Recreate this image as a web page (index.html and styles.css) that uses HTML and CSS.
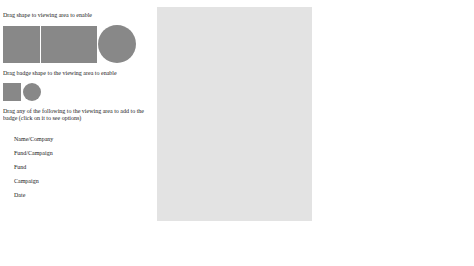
FILE: index.html
```html
<!DOCTYPE html>
<html lang="en">

<head>
    <meta charset="UTF-8">
    <link rel="stylesheet" href="styles.css">
    <title>Badge Designer</title>
</head>

<body>
    <div class="tools">
        <p class="hint hint-shape">Drag shape to viewing area to enable</p>
        <div class="shape-row">
            <div class="shape shape-square"></div>
            <div class="shape shape-rect"></div>
            <div class="shape shape-circle"></div>
        </div>

        <p class="hint hint-badge">Drag badge shape to the viewing area to enable</p>
        <div class="badge-row">
            <div class="badge badge-square"></div>
            <div class="badge badge-circle"></div>
        </div>

        <p class="hint hint-fields">Drag any of the following to the viewing area to add to the badge (click on it to see options)</p>
        <ul class="field-list">
            <li>Name/Company</li>
            <li>Fund/Campaign</li>
            <li>Fund</li>
            <li>Campaign</li>
            <li>Date</li>
        </ul>
    </div>

    <div class="viewing-area"></div>
</body>

</html>
```

FILE: styles.css
```css
body {
    margin: 3px;
    font-family: "Liberation Serif", "Times New Roman", serif;
    font-size: 6px;
    color: #1a1a1a;
    background-color: #fff;
    display: flex;
    align-items: flex-start;
}

.tools {
    width: 154px;
}

.hint {
    margin: 0;
    line-height: 7px;
}

.hint-shape {
    margin-top: 9px;
}

.shape-row {
    display: flex;
    align-items: center;
    gap: 1px;
    margin-top: 6px;
}

.shape {
    background-color: #888;
}

.shape-square {
    width: 37px;
    height: 37px;
}

.shape-rect {
    width: 56px;
    height: 37px;
}

.shape-circle {
    width: 38px;
    height: 38px;
    border-radius: 50%;
}

.hint-badge {
    margin-top: 7px;
}

.badge-row {
    display: flex;
    gap: 2px;
    margin-top: 6px;
}

.badge {
    width: 18px;
    height: 18px;
    background-color: #888;
}

.badge-circle {
    border-radius: 50%;
}

.hint-fields {
    margin-top: 7px;
    line-height: 6.5px;
    width: 145px;
}

.field-list {
    list-style: none;
    margin: 15px 0 0;
    padding: 0 0 0 11px;
}

.field-list li {
    line-height: 7px;
    margin-bottom: 7px;
}

.viewing-area {
    width: 155px;
    height: 214px;
    margin-top: 4px;
    background-color: #e3e3e3;
}
```
